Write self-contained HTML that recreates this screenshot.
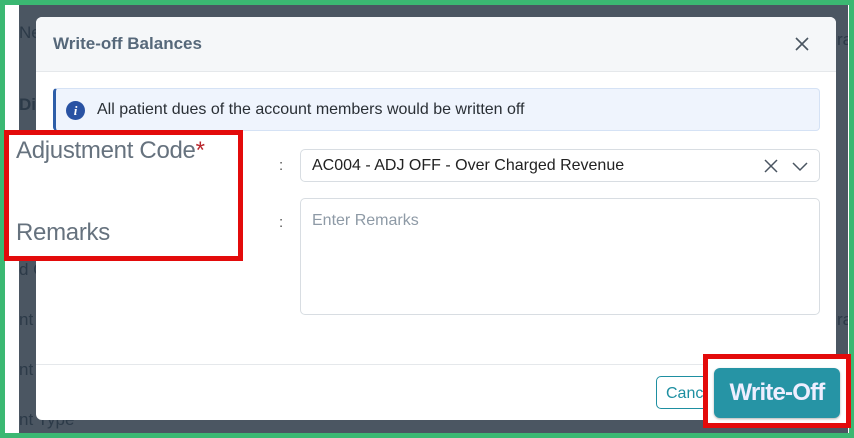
<!DOCTYPE html>
<html><head><style>
*{box-sizing:border-box;margin:0;padding:0}
body{width:854px;height:438px;overflow:hidden;background:#3bb872;font-family:"Liberation Sans",sans-serif;position:relative}
.white{position:absolute;left:5px;top:5px;width:844px;height:428px;background:#fff}
.dark{position:absolute;left:19px;top:5px;width:829px;height:428px;background:#4b5662;overflow:hidden;color:#2c3a48;font-size:17px}
.modal{position:absolute;left:36px;top:17px;width:800px;height:403px;background:#fff;border-radius:6px;overflow:hidden}
.hdr{height:55px;background:#f5f7f9;border-bottom:1px solid #e5e8eb;position:relative}
.hdr h1{position:absolute;left:17px;top:17px;font-size:17px;font-weight:bold;color:#56687a}
.x{position:absolute;right:24px;top:17px;width:20px;height:20px}
.info{position:absolute;left:17px;top:71px;width:767px;height:43px;background:#eff4fd;border:1px solid #d5e2f5;border-left:3px solid #2e5ea8;border-radius:4px}
.info .i{position:absolute;left:10px;top:12px;width:19px;height:19px;border-radius:50%;background:#2952a3;color:#fff;font:italic bold 13px "Liberation Serif",serif;text-align:center;line-height:19px}
.info span{position:absolute;left:41px;top:12px;font-size:16px;color:#2a2f35}
.colon{position:absolute;left:243px;font-size:15px;color:#555}
.sel{position:absolute;left:264px;top:132px;width:520px;height:33px;border:1px solid #d8dde2;border-radius:5px}
.sel span{position:absolute;left:11px;top:7px;font-size:16px;color:#222}
.ta{position:absolute;left:264px;top:181px;width:520px;height:117px;border:1px solid #d8dde2;border-radius:5px}
.ta span{position:absolute;left:11px;top:13px;font-size:16px;color:#8e9aa6}
.ftr{position:absolute;left:0;top:347px;width:800px;border-top:1px solid #e5e8eb}
.cancel{position:absolute;left:620px;top:359px;width:70px;height:33px;border:1px solid #1e8fa1;border-radius:5px;color:#1e8fa1;font-size:16px;padding:8px 9px;overflow:hidden;white-space:nowrap}
.red1{position:absolute;left:4px;top:130px;width:239px;height:131px;border:5px solid #e30b0b;background:#fff}
.red1 .a{position:absolute;left:7px;top:2px;font-size:24px;color:#66727e;letter-spacing:-0.3px}
.red1 .a b{color:#b8262c;font-weight:normal}
.red1 .r{position:absolute;left:7px;top:84px;font-size:24px;color:#66727e;letter-spacing:-0.3px}
.red2{position:absolute;left:703px;top:354px;width:148px;height:74px;border:5px solid #e30b0b;background:#fff}
.btn{position:absolute;left:6px;top:9px;width:126px;height:50px;background:#2694a5;border-radius:6px;color:#eef;font-size:24px;font-weight:bold;letter-spacing:-0.8px;text-align:center;line-height:50px;box-shadow:0 1px 2px rgba(0,0,0,.3)}
</style></head><body>
<div class="white"></div>
<div class="dark">
<div style="position:absolute;left:0;top:18px">New</div>
<div style="position:absolute;left:0;top:90px;font-weight:bold">Dis</div>
<div style="position:absolute;left:0;top:255px">d C</div>
<div style="position:absolute;left:0;top:305px">nt</div>
<div style="position:absolute;left:0;top:355px">nt</div>
<div style="position:absolute;left:0;top:405px">nt Type</div>
<div style="position:absolute;left:818px;top:25px">ra</div>
<div style="position:absolute;left:818px;top:305px">ra</div>
</div>
<div class="modal">
<div class="hdr"><h1>Write-off Balances</h1>
<svg class="x" viewBox="0 0 20 20"><path d="M4 4L16 16M16 4L4 16" stroke="#4a5561" stroke-width="1.6"/></svg></div>
<div class="info"><div class="i">i</div><span>All patient dues of the account members would be written off</span></div>
<div class="colon" style="top:140px">:</div>
<div class="colon" style="top:197px">:</div>
<div class="sel"><span>AC004 - ADJ OFF - Over Charged Revenue</span>
<svg style="position:absolute;left:462px;top:8px" width="16" height="16" viewBox="0 0 16 16"><path d="M2 2L14 14M14 2L2 14" stroke="#4a5561" stroke-width="1.5"/></svg>
<svg style="position:absolute;left:490px;top:8px" width="18" height="16" viewBox="0 0 18 16"><path d="M2 5L9 12L16 5" stroke="#4a5561" stroke-width="1.5" fill="none"/></svg></div>
<div class="ta"><span>Enter Remarks</span></div>
<div class="ftr"></div>
<div class="cancel">Cancel</div>
</div>
<div class="red1"><div class="a">Adjustment Code<b>*</b></div><div class="r">Remarks</div></div>
<div class="red2"><div class="btn">Write-Off</div></div>
</body></html>
